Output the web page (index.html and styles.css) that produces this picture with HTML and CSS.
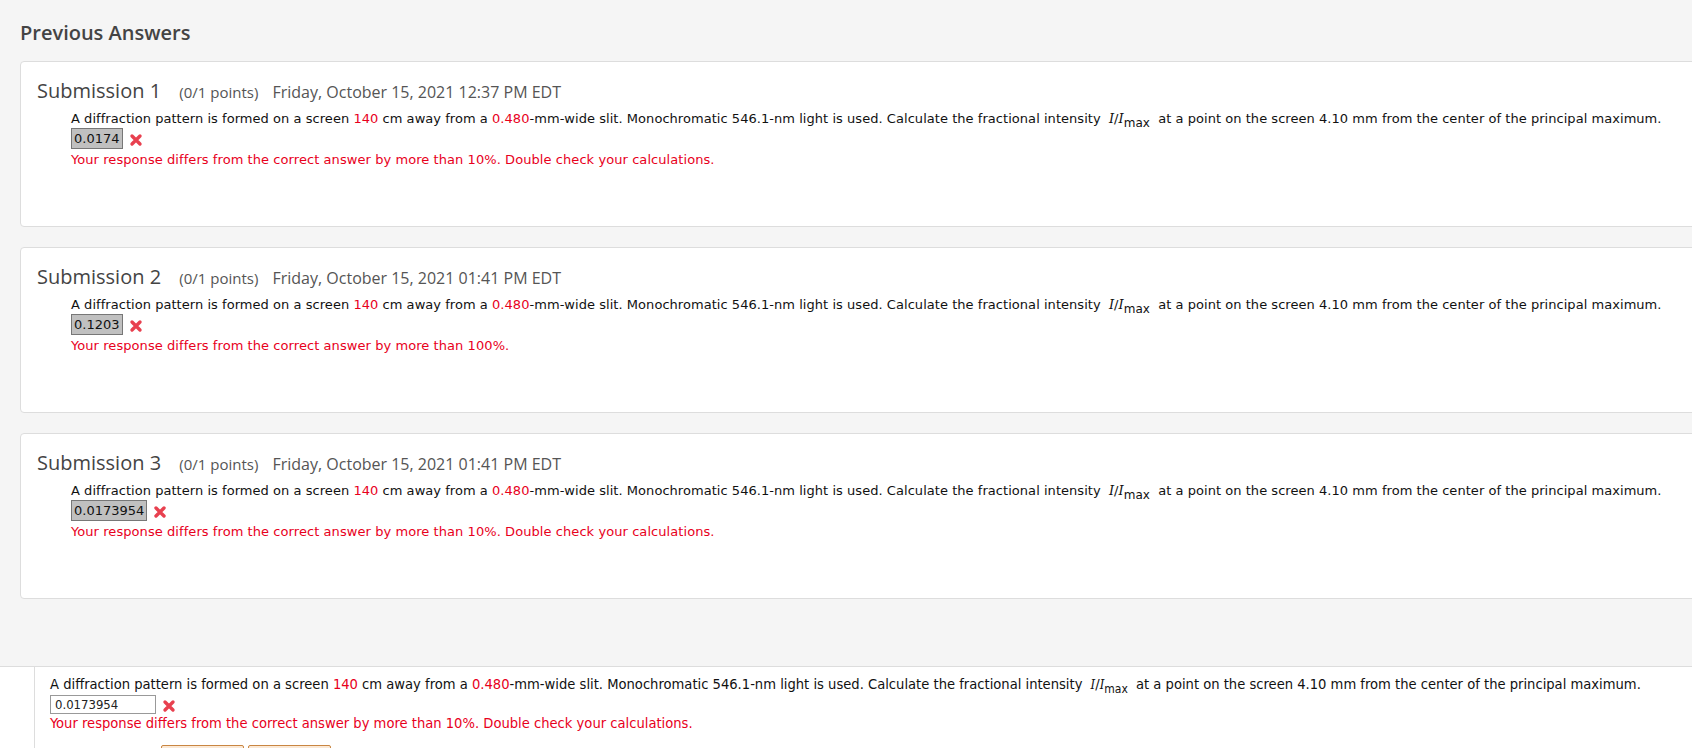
FILE: index.html
```html
<!DOCTYPE html>
<html lang="en">
<head>
  <meta charset="UTF-8">
  <title>Previous Answers</title>
  <link rel="stylesheet" href="styles.css">
</head>
<body>

  <div class="page">
    <h2 class="title">Previous Answers</h2>

    <div class="submissions">

      <!-- Submission 1 -->
      <div class="card">
        <div class="card-head">
          <span class="sub-name">Submission 1</span>
          <span class="sub-points">(0/1 points)</span>
          <span class="sub-date">Friday, October 15, 2021 12:37 PM EDT</span>
        </div>
        <div class="question">
          <p class="q-text">A diffraction pattern is formed on a screen <span class="num">140</span> cm away from a <span class="num">0.480</span>-mm-wide slit. Monochromatic 546.1-nm light is used. Calculate the fractional intensity <span class="math"><i>I</i>/<i>I</i><sub>max</sub></span> at a point on the screen 4.10 mm from the center of the principal maximum.</p>
          <div class="answer-row">
            <span class="answer">0.0174</span>
            <svg class="wrong" width="14" height="14" viewBox="0 0 14 14"><path d="M3 3L11 11M11 3L3 11" stroke="#e8404f" stroke-width="3.4" stroke-linecap="round"/></svg>
          </div>
          <p class="feedback">Your response differs from the correct answer by more than 10%. Double check your calculations.</p>
        </div>
      </div>

      <!-- Submission 2 -->
      <div class="card">
        <div class="card-head">
          <span class="sub-name">Submission 2</span>
          <span class="sub-points">(0/1 points)</span>
          <span class="sub-date">Friday, October 15, 2021 01:41 PM EDT</span>
        </div>
        <div class="question">
          <p class="q-text">A diffraction pattern is formed on a screen <span class="num">140</span> cm away from a <span class="num">0.480</span>-mm-wide slit. Monochromatic 546.1-nm light is used. Calculate the fractional intensity <span class="math"><i>I</i>/<i>I</i><sub>max</sub></span> at a point on the screen 4.10 mm from the center of the principal maximum.</p>
          <div class="answer-row">
            <span class="answer">0.1203</span>
            <svg class="wrong" width="14" height="14" viewBox="0 0 14 14"><path d="M3 3L11 11M11 3L3 11" stroke="#e8404f" stroke-width="3.4" stroke-linecap="round"/></svg>
          </div>
          <p class="feedback">Your response differs from the correct answer by more than 100%.</p>
        </div>
      </div>

      <!-- Submission 3 -->
      <div class="card">
        <div class="card-head">
          <span class="sub-name">Submission 3</span>
          <span class="sub-points">(0/1 points)</span>
          <span class="sub-date">Friday, October 15, 2021 01:41 PM EDT</span>
        </div>
        <div class="question">
          <p class="q-text">A diffraction pattern is formed on a screen <span class="num">140</span> cm away from a <span class="num">0.480</span>-mm-wide slit. Monochromatic 546.1-nm light is used. Calculate the fractional intensity <span class="math"><i>I</i>/<i>I</i><sub>max</sub></span> at a point on the screen 4.10 mm from the center of the principal maximum.</p>
          <div class="answer-row">
            <span class="answer">0.0173954</span>
            <svg class="wrong" width="14" height="14" viewBox="0 0 14 14"><path d="M3 3L11 11M11 3L3 11" stroke="#e8404f" stroke-width="3.4" stroke-linecap="round"/></svg>
          </div>
          <p class="feedback">Your response differs from the correct answer by more than 10%. Double check your calculations.</p>
        </div>
      </div>

    </div>
  </div>

  <!-- current question -->
  <div class="current">
    <div class="current-body">
      <p class="q-text">A diffraction pattern is formed on a screen <span class="num">140</span> cm away from a <span class="num">0.480</span>-mm-wide slit. Monochromatic 546.1-nm light is used. Calculate the fractional intensity <span class="math"><i>I</i>/<i>I</i><sub>max</sub></span> at a point on the screen 4.10 mm from the center of the principal maximum.</p>
      <div class="answer-row">
        <input type="text" class="answer-input" value="0.0173954">
        <svg class="wrong" width="14" height="14" viewBox="0 0 14 14"><path d="M3 3L11 11M11 3L3 11" stroke="#e8404f" stroke-width="3.4" stroke-linecap="round"/></svg>
      </div>
      <p class="feedback">Your response differs from the correct answer by more than 10%. Double check your calculations.</p>
      <div class="buttons">
        <button aria-label="Submit Answer"></button>
        <button aria-label="Save Progress"></button>
      </div>
    </div>
  </div>

</body>
</html>
```

FILE: styles.css
```css
body {
  margin: 0;
  background: #f5f5f5;
  overflow: hidden;
  font-family: "Open Sans", "DejaVu Sans", sans-serif;
}

.page {
  padding: 0 0 0 20px;
}

.title {
  margin: 0 0 15px 0;
  padding-top: 20px;
  font-size: 20px;
  line-height: 26px;
  font-weight: 600;
  color: #444;
}

.submissions {
  display: flex;
  flex-direction: column;
  gap: 20px;
}

.card {
  width: 1720px;
  height: 166px;
  box-sizing: border-box;
  background: #fff;
  border: 1px solid #ddd;
  border-radius: 4px;
  padding: 15px 0 0 16px;
}

.card-head {
  line-height: 28px;
  color: #555;
}

.sub-name {
  font-size: 20px;
  color: #444;
  margin-right: 14px;
}

.sub-points {
  font-size: 15px;
  margin-right: 10px;
}

.sub-date {
  font-size: 16px;
}

.question {
  margin: 4px 0 0 34px;
}

.q-text {
  margin: 0;
  font-family: "DejaVu Sans", Verdana, sans-serif;
  font-size: 13px;
  letter-spacing: 0.045px;
  line-height: 18px;
  color: #111;
  white-space: nowrap;
}

.num {
  color: #e8001c;
}

.math {
  margin: 0 4px;
}

.math i {
  font-family: "DejaVu Serif", "Liberation Serif", serif;
  font-size: 13px;
}

.math sub {
  font-family: "DejaVu Sans", sans-serif;
  font-size: 12px;
  line-height: 0;
  vertical-align: -4px;
}

.answer-row {
  display: flex;
  align-items: center;
  gap: 6px;
  height: 21px;
}

.answer {
  box-sizing: border-box;
  height: 21px;
  padding: 1px 2px;
  background: #c0c0c0;
  border: 1px solid #777;
  font-family: "DejaVu Sans", Verdana, sans-serif;
  font-size: 13px;
  line-height: 17px;
  color: #111;
}

.wrong {
  margin-top: 3px;
}

.feedback {
  margin: 2px 0 0 0;
  font-family: "DejaVu Sans", Verdana, sans-serif;
  font-size: 13px;
  letter-spacing: 0.07px;
  line-height: 18px;
  color: #e8001c;
  white-space: nowrap;
}

/* current question at the bottom */
.current {
  margin-top: 67px;
  background: #fff;
  border-top: 1px solid #ddd;
  height: 81px;
  overflow: hidden;
}

.current-body {
  margin-left: 34px;
  border-left: 1px solid #ddd;
  padding: 8px 0 0 15px;
  height: 100%;
}

.current-body .q-text,
.current-body .feedback {
  font-family: "DejaVu Sans Condensed", "Liberation Sans Narrow", sans-serif;
  font-stretch: condensed;
  font-size: 14.6px;
  letter-spacing: 0;
}

.current-body .answer-row {
  height: 20px;
}

.current-body .feedback {
  margin-top: 0;
}

.answer-input {
  box-sizing: border-box;
  width: 106px;
  height: 19px;
  margin: 0;
  padding: 0 4px;
  border: 1px solid #999;
  font-family: "DejaVu Sans Condensed", "Liberation Sans Narrow", sans-serif;
  font-size: 13px;
  color: #222;
}

.buttons {
  margin: 13px 0 0 111px;
  display: flex;
  gap: 4px;
}

.buttons button {
  width: 83px;
  height: 26px;
  background: #fbe9d6;
  border: 1px solid #c98642;
  border-radius: 2px;
}
```
